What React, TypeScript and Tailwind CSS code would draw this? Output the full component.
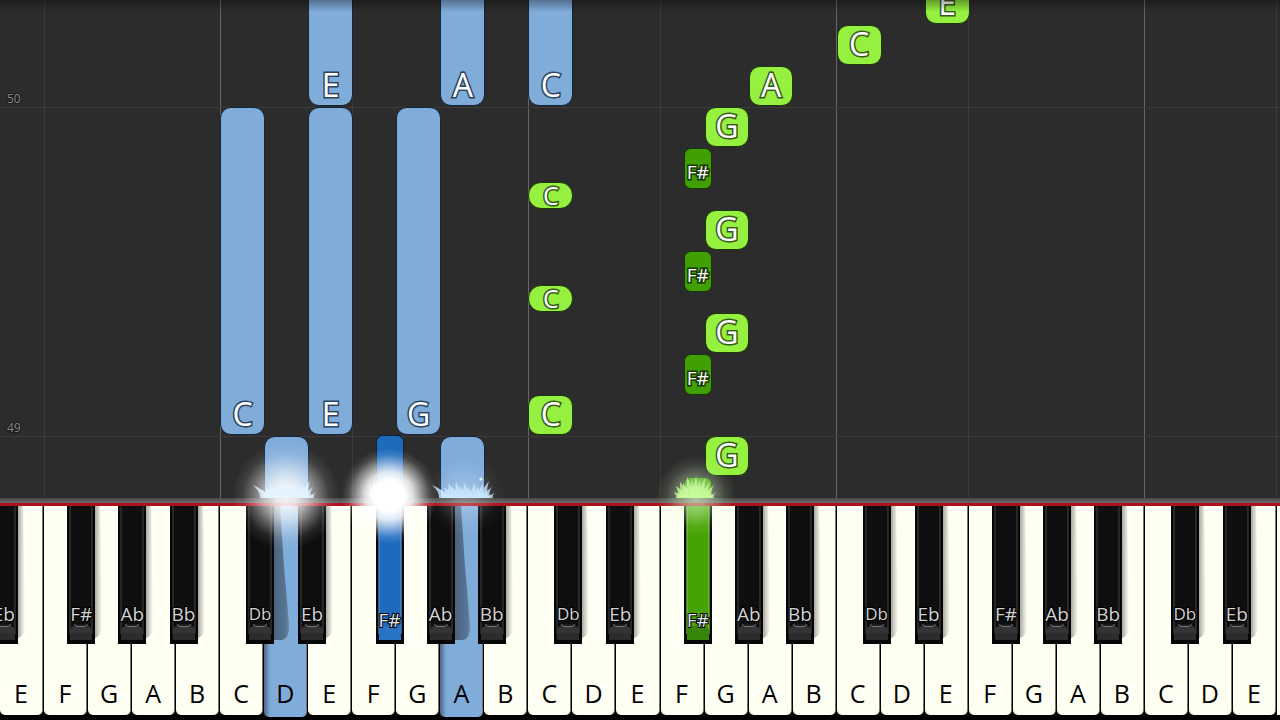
import clsx from "clsx"

const LANES = 29

const WHITE_NAMES = ["C", "D", "E", "F", "G", "A", "B"]

// The keyboard starts on an E, so C sits on lanes 5, 12, 19 and 26
const whiteKeys = Array.from({ length: LANES }, (_, lane) => ({
    lane,
    name: WHITE_NAMES[(lane + 2) % 7],
}))

const BLACK_PATTERN = [
    { name: "Db", offset: 0.59 },
    { name: "Eb", offset: 1.77 },
    { name: "F#", offset: 3.53 },
    { name: "Ab", offset: 4.69 },
    { name: "Bb", offset: 5.85 },
]

const blackKeys = [-2, 5, 12, 19, 26]
    .flatMap((octave) => BLACK_PATTERN.map((k) => ({ name: k.name, pos: octave + k.offset })))
    .filter((k) => k.pos > -0.6 && k.pos < 28.5)

type Tone = "blue" | "green" | "darkBlue" | "darkGreen"

const pressedWhite: number[] = [6, 10]
const pressedBlack: Record<string, Tone> = { "8.53": "darkBlue", "15.53": "darkGreen" }

interface Note {
    name: string
    pos: number
    from: number // distance above the strike line
    length: number
    tone: Tone
    silent?: boolean
}

const notes: Note[] = [
    { name: "E", pos: 7, from: 392, length: 160, tone: "blue" },
    { name: "A", pos: 10, from: 392, length: 160, tone: "blue" },
    { name: "C", pos: 12, from: 392, length: 160, tone: "blue" },
    { name: "C", pos: 5, from: 63, length: 328, tone: "blue" },
    { name: "E", pos: 7, from: 63, length: 328, tone: "blue" },
    { name: "G", pos: 9, from: 63, length: 328, tone: "blue" },
    { name: "D", pos: 6, from: -40, length: 102, tone: "blue", silent: true },
    { name: "A", pos: 10, from: -40, length: 102, tone: "blue", silent: true },
    { name: "F#", pos: 8.53, from: -40, length: 103, tone: "darkBlue", silent: true },
    { name: "F#", pos: 15.53, from: -20, length: 41, tone: "darkGreen", silent: true },
    { name: "E", pos: 21, from: 474, length: 40, tone: "green" },
    { name: "C", pos: 19, from: 433, length: 40, tone: "green" },
    { name: "A", pos: 17, from: 392, length: 40, tone: "green" },
    { name: "G", pos: 16, from: 351, length: 40, tone: "green" },
    { name: "F#", pos: 15.53, from: 309, length: 41, tone: "darkGreen" },
    { name: "C", pos: 12, from: 289, length: 27, tone: "green" },
    { name: "G", pos: 16, from: 248, length: 40, tone: "green" },
    { name: "F#", pos: 15.53, from: 206, length: 41, tone: "darkGreen" },
    { name: "C", pos: 12, from: 186, length: 27, tone: "green" },
    { name: "G", pos: 16, from: 145, length: 40, tone: "green" },
    { name: "F#", pos: 15.53, from: 103, length: 41, tone: "darkGreen" },
    { name: "C", pos: 12, from: 63, length: 40, tone: "green" },
    { name: "G", pos: 16, from: 22, length: 40, tone: "green" },
]

const measures = [
    { label: 50, from: 390 },
    { label: 49, from: 61 },
]

const percent = (lanes: number) => `${(lanes / LANES) * 100}%`

const noteTones: Record<Tone, string> = {
    blue: "bg-[#80acda] border-[#13263b]",
    green: "bg-[#96f03f] border-[#1b3805]",
    darkBlue: "bg-[#1e6abb] border-[#0b2442]",
    darkGreen: "bg-[#429f03] border-[#163703]",
}

const labelTones: Record<Tone, string> = {
    blue: "[-webkit-text-stroke:3px_#2b435f]",
    green: "[-webkit-text-stroke:3px_#355a1c]",
    darkBlue: "[-webkit-text-stroke:3px_#0b2442]",
    darkGreen: "[-webkit-text-stroke:3px_#173803]",
}

function NoteBlock({ note }: { note: Note }) {
    const sharp = note.tone === "darkBlue" || note.tone === "darkGreen"
    const short = note.length < 30
    return (
        <div
            className={clsx(
                "absolute flex items-end justify-center border text-white",
                sharp ? "w-7 rounded-[7px]" : short ? "rounded-[13px]" : "rounded-[11px]",
                noteTones[note.tone]
            )}
            style={{
                left: percent(note.pos),
                bottom: note.from,
                height: note.length,
                width: sharp ? undefined : percent(1.02),
            }}
        >
            {!note.silent && (
                <span
                    className={clsx(
                        "[paint-order:stroke_fill]",
                        sharp
                            ? "pb-1 text-[19px] leading-6"
                            : short
                              ? "pb-px text-[25px] leading-6"
                              : "pb-0.5 text-[32px] leading-9",
                        labelTones[note.tone]
                    )}
                >
                    {note.name}
                </span>
            )}
        </div>
    )
}

function NoteRoll() {
    return (
        <div className="relative flex flex-1 overflow-hidden bg-[#2c2c2c]">
            {/* lane guides: bright before every C, faint before every F */}
            <div className="mr-[3px] grid flex-1 grid-cols-[repeat(29,minmax(0,1fr))] border-r border-[#3a3a3a]">
                {whiteKeys.map((k) => (
                    <div
                        key={k.lane}
                        className={clsx(
                            k.name === "C" && "border-l border-[#666666]",
                            k.name === "F" && "border-l border-[#3a3a3a]"
                        )}
                    />
                ))}
            </div>
            {measures.map((m) => (
                <div
                    key={m.label}
                    className="absolute inset-x-0 border-b border-[#3b3b3b] px-[7px] text-[12px] leading-4 text-[#8a8a8a]"
                    style={{ bottom: m.from }}
                >
                    <span className="[paint-order:stroke_fill] [-webkit-text-stroke:2px_#1a1a1a]">{m.label}</span>
                </div>
            ))}
            <div className="absolute inset-y-0 left-0 right-[3px]">
                {notes.map((note, i) => (
                    <NoteBlock key={i} note={note} />
                ))}
            </div>
            <div className="absolute inset-x-0 top-0 h-3 bg-linear-to-b from-black/35 to-transparent" />
        </div>
    )
}

// Each blade: foot x, tip x, tip y
type Blade = [number, number, number]

const wideBlades: Blade[] = [
    [14, 3, 13], [17, 10, 17], [20, 15, 15], [22, 20, 11], [26, 22, 14], [29, 27, 10],
    [33, 31, 14], [36, 36, 11], [40, 39, 14], [44, 46, 11], [48, 49, 14], [51, 54, 12],
    [55, 60, 9], [57, 63, 15], [60, 69, 20],
]

const narrowBlades: Blade[] = [
    [20, 14, 20], [22, 16, 14], [24, 20, 10], [27, 23, 11], [30, 27, 5], [33, 32, 8],
    [36, 36, 4], [39, 40, 8], [42, 45, 6], [45, 50, 10], [48, 54, 13], [50, 58, 20],
]

const flares = [
    { id: "d", center: 6.5, blades: wideBlades, fill: "#e4f4ff", glow: "wide" },
    { id: "fs", center: 8.84, blades: narrowBlades, fill: "#ffffff", glow: "full" },
    { id: "a", center: 10.55, blades: wideBlades, fill: "#c9e8ff", glow: "faint" },
    { id: "gs", center: 15.8, blades: narrowBlades, fill: "#c8fb9b", glow: "green" },
]

const glows: Record<string, string> = {
    wide: "size-[108px] bg-[radial-gradient(closest-side,#fffffff0_0%,#ffffffd8_20%,#ffffffa0_40%,#ffffff58_60%,#ffffff18_80%,transparent)]",
    full: "size-[96px] bg-[radial-gradient(closest-side,#ffffff_0%,#ffffff_32%,#ffffffd8_50%,#ffffff70_70%,#ffffff20_86%,transparent)]",
    faint: "size-20 bg-[radial-gradient(closest-side,#ffffff50_0%,#ffffff28_45%,#ffffff0a_75%,transparent)]",
    green: "size-20 bg-[radial-gradient(closest-side,#e0ffd0b0_0%,#e0ffd068_40%,#e0ffd01c_75%,transparent)]",
}

function Flare({ center, blades, fill, glow }: (typeof flares)[number]) {
    return (
        <div className="absolute bottom-full flex h-1 w-0 items-center justify-center" style={{ left: percent(center) }}>
            <div className={clsx("shrink-0 rounded-full", glows[glow])} />
            <svg viewBox="0 0 72 26" className="absolute bottom-0 h-[26px] w-[72px] max-w-none">
                {blades.map(([foot, tipX, tipY], i) => (
                    <path
                        key={i}
                        d={`M${foot - 4} 26 Q${foot - 3} ${(tipY + 28) / 2} ${tipX} ${tipY} Q${foot + 2} ${(tipY + 24) / 2} ${foot + 4} 26Z`}
                        fill={fill}
                        opacity={0.8}
                    />
                ))}
                {glow === "faint" && <circle cx="52" cy="7" r="1.6" fill="#e9f6ff" />}
            </svg>
        </div>
    )
}

function StrikeLine() {
    return (
        <div className="relative z-20 h-2 border-b-[3px] border-[#ad0f1b] bg-linear-to-b from-[#474747] to-[#6a6a6a]">
            <div className="relative mr-[3px] h-full">
                {flares.map((f) => (
                    <Flare key={f.id} {...f} />
                ))}
            </div>
        </div>
    )
}

function WhiteKey({ name, pressed }: { name: string; pressed: boolean }) {
    return (
        <button
            type="button"
            aria-pressed={pressed}
            className={clsx(
                "mr-px flex items-end justify-center rounded-b-[5px] border-r border-[#77776f] text-[25px] leading-8 text-black",
                pressed
                    ? "mb-[3px] bg-[#80acda] bg-linear-to-r from-black/40 via-transparent via-15% to-transparent pb-2"
                    : "mb-[5px] bg-[#fffff4] pb-1.5"
            )}
        >
            {name}
        </button>
    )
}

function BlackKey({ name, pos, tone, wedge }: { name: string; pos: number; tone?: Tone; wedge: boolean }) {
    const face = tone === "darkBlue" ? "#1e6abf" : tone === "darkGreen" ? "#46a205" : "#0e0e0f"
    const edge = tone === "darkBlue" ? "#5590d2" : tone === "darkGreen" ? "#78c93c" : "#3d3d3f"
    const lip = tone === "darkBlue" ? "#2a74c8" : tone === "darkGreen" ? "#37850a" : "#343436"
    return (
        <button
            type="button"
            aria-pressed={!!tone}
            className={clsx("absolute top-0 flex h-[138px] w-7 items-end justify-center", tone ? "pb-3" : "pb-[18px]")}
            style={{ left: percent(pos) }}
        >
            <svg viewBox="0 0 48 138" className="absolute left-0 top-0 h-full w-12 max-w-none">
                <defs>
                    <linearGradient id={`shade-${pos}`} gradientUnits="userSpaceOnUse" x1="28" x2={wedge ? "45" : "35"} y1="0" y2="0">
                        <stop offset="0" stopColor="#000" stopOpacity={wedge ? 0.42 : 0.34} />
                        <stop offset={wedge ? "0.7" : "0.4"} stopColor="#000" stopOpacity={wedge ? 0.32 : 0.2} />
                        <stop offset="1" stopColor="#000" stopOpacity={wedge ? 0.12 : 0} />
                    </linearGradient>
                </defs>
                {wedge && <path d="M28 0H34L38 60L43 118Q44 132 36 134H28Z" fill={`url(#shade-${pos})`} />}
                {!tone && !wedge && <path d="M28 0H33L35 90V122Q34 130 28 132Z" fill={`url(#shade-${pos})`} />}
                <rect width="28" height="138" fill="#050505" />
                <rect x="3" width="22" height="134" fill={face} />
                <path d="M3 0V128M25 0V128" stroke={edge} strokeWidth="1.2" />
                <path d="M3 134V124Q4 120 8 120H20Q24 120 25 124V134Z" fill={lip} />
                {!tone && (
                    <>
                        <path d="M6 118H22L19 121H9Z" fill="#1c1c1e" />
                        <path d="M7 118.5L10 120.5H18L21 118.5" stroke="#77777a" fill="none" />
                        <path d="M3 127H25V134H3Z" fill="#2a2a2c" opacity=".7" />
                    </>
                )}
            </svg>
            <span
                className={clsx(
                    "relative leading-6 [paint-order:stroke_fill] [-webkit-text-stroke:2px_#000000]",
                    tone ? "text-[#e2e6ea]" : "text-[#d2d2d2]",
                    name === "Db" ? "text-[17px]" : "text-[19px]"
                )}
            >
                {name}
            </span>
        </button>
    )
}

function Keyboard() {
    return (
        <div className="flex h-[214px] overflow-hidden bg-black">
            <div className="relative flex-1">
                <div className="grid h-full grid-cols-[repeat(29,minmax(0,1fr))]">
                    {whiteKeys.map((k) => (
                        <WhiteKey key={k.lane} name={k.name} pressed={pressedWhite.includes(k.lane)} />
                    ))}
                </div>
                {blackKeys.map((k) => (
                    <BlackKey
                        key={k.pos}
                        name={k.name}
                        pos={k.pos}
                        tone={pressedBlack[k.pos.toFixed(2)]}
                        wedge={pressedWhite.includes(Math.ceil(k.pos))}
                    />
                ))}
            </div>
            <div className="mb-[5px] w-[3px] bg-[#fffff4]" />
        </div>
    )
}

export default function App() {
    return (
        <main className="flex min-h-screen select-none flex-col overflow-hidden bg-black font-['Open_Sans','Noto_Sans',sans-serif]">
            <NoteRoll />
            <StrikeLine />
            <Keyboard />
        </main>
    )
}
